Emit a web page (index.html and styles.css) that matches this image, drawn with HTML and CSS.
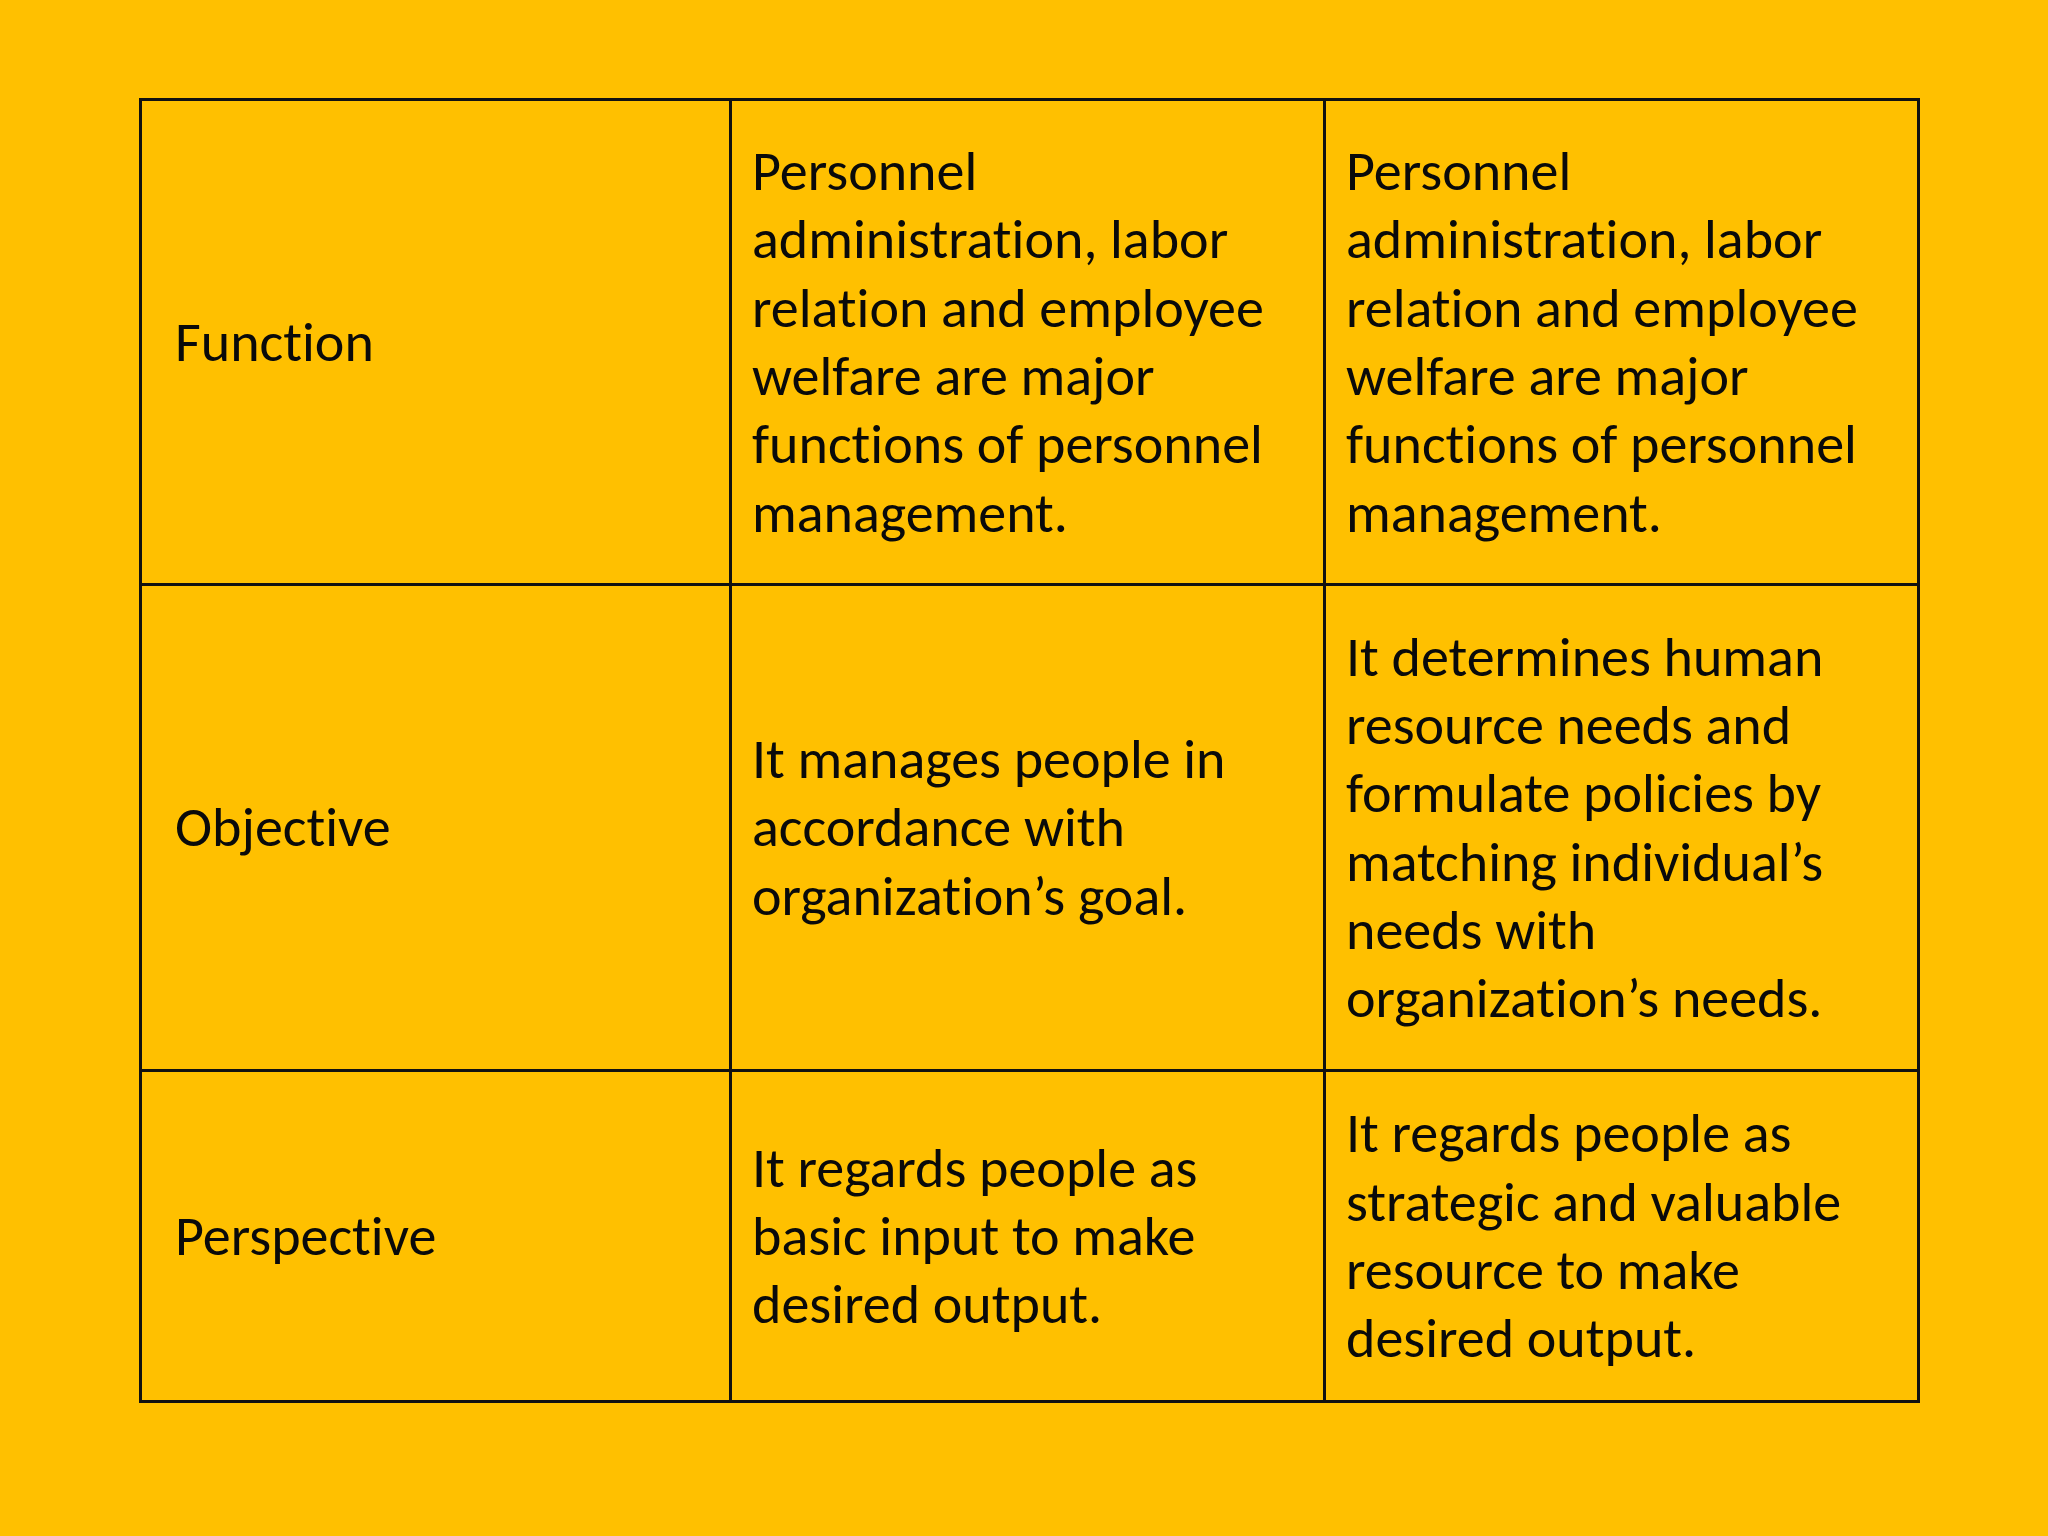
FILE: index.html
```html
<!DOCTYPE html>
<html lang="en">
<head>
<meta charset="utf-8">
<title>Personnel Management vs HRM</title>
<link rel="stylesheet" href="styles.css">
</head>
<body>
<div class="slide">
  <div class="grid">
    <div class="cell first"><p>Function</p></div>
    <div class="cell"><p>Personnel<br>administration, labor<br>relation and employee<br>welfare are major<br>functions of personnel<br>management.</p></div>
    <div class="cell"><p>Personnel<br>administration, labor<br>relation and employee<br>welfare are major<br>functions of personnel<br>management.</p></div>

    <div class="cell first"><p>Objective</p></div>
    <div class="cell"><p>It manages people in<br>accordance with<br>organization’s goal.</p></div>
    <div class="cell"><p>It determines human<br>resource needs and<br>formulate policies by<br>matching individual’s<br>needs with<br>organization’s needs.</p></div>

    <div class="cell first"><p>Perspective</p></div>
    <div class="cell"><p>It regards people as<br>basic input to make<br>desired output.</p></div>
    <div class="cell"><p>It regards people as<br>strategic and valuable<br>resource to make<br>desired output.</p></div>
  </div>
</div>
</body>
</html>
```

FILE: styles.css
```css
html, body {
  margin: 0;
  padding: 0;
  background: #ffc000;
}
.slide {
  width: 2048px;
  height: 1536px;
  background: #ffc000;
  padding: 98px 0 0 139px;
  box-sizing: border-box;
}
.grid {
  display: grid;
  grid-template-columns: 590px 594px 594px;
  grid-template-rows: 485px 486px 331px;
  border-top: 3px solid #111;
  border-left: 3px solid #111;
  width: max-content;
}
.cell {
  border-right: 3px solid #111;
  border-bottom: 3px solid #111;
  display: flex;
  align-items: center;
  padding: 0 10px 0 20px;
  font-family: Carlito, Calibri, "Open Sans", sans-serif;
  font-size: 56px;
  line-height: 68.3px;
  color: #0a0a0a;
  font-variant-ligatures: none;
  font-feature-settings: "liga" 0, "clig" 0;
}
.cell.first {
  padding-left: 33px;
}
.cell p {
  margin: 0;
  white-space: nowrap;
}
```
